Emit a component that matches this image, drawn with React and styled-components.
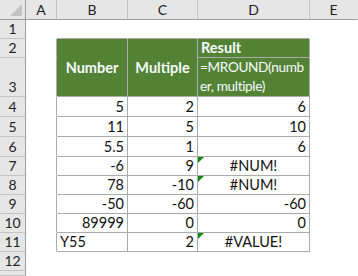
import React from 'react';
import styled, { createGlobalStyle } from 'styled-components';

const Global = createGlobalStyle`
  html, body { margin: 0; padding: 0; background: #fff; }
  body { font-family: Lato, 'Open Sans', sans-serif; }
`;

const GREEN = '#548235';
const LINE = '#ababab';

const Sheet = styled.div`
  display: grid;
  grid-template-columns: 26px 31px 71px 70px 112px 1fr;
  grid-template-rows: 20px 19px 19px 39px 20px 20px 20px 19px 19px 19px 19px 19px 19px 1fr;
  width: 358px;
  height: 276px;
  overflow: hidden;
  font-size: 14.5px;
  color: #111;
`;

const Corner = styled.div`
  position: relative;
  background: #e6e6e6;
  border-right: 1px solid #9b9b9b;
  border-bottom: 1px solid #9b9b9b;
  &::after {
    content: '';
    position: absolute;
    right: 3px;
    bottom: 3px;
    border-style: solid;
    border-width: 0 0 12px 12px;
    border-color: transparent transparent #c2c2c2 transparent;
  }
`;

const ColHead = styled.div`
  background: #e6e6e6;
  border-right: 1px solid ${p => (p.$last ? '#e6e6e6' : '#c4c4c4')};
  border-bottom: 1px solid #9b9b9b;
  display: flex;
  align-items: center;
  justify-content: center;
  color: #222;
  font-size: 14px;
`;

const RowHead = styled.div`
  background: #e6e6e6;
  border-right: 1px solid #9b9b9b;
  border-bottom: 1px solid #c4c4c4;
  display: flex;
  align-items: flex-end;
  justify-content: center;
  color: #222;
  font-size: 14px;
  line-height: 18px;
`;

const Cell = styled.div`
  position: relative;
  grid-row: span ${p => p.$span || 1};
  background: ${p => (p.$green ? GREEN : '#fff')};
  color: ${p => (p.$green ? '#f4fbff' : '#111')};
  font-weight: ${p => (p.$bold ? 700 : 400)};
  border-right: 1px solid ${p => (p.$right ? LINE : 'transparent')};
  border-bottom: 1px solid ${p => (p.$bottom ? LINE : 'transparent')};
  display: flex;
  flex-direction: ${p => (p.$stack ? 'column' : 'row')};
  align-items: ${p => p.$valign || 'flex-end'};
  justify-content: ${p => p.$align || 'flex-start'};
  padding: 0 3px;
  line-height: 18px;
  white-space: nowrap;
  overflow: hidden;
  &::before {
    content: '';
    display: ${p => (p.$flag ? 'block' : 'none')};
    position: absolute;
    left: 0;
    top: 0;
    border-style: solid;
    border-width: 6px 6px 0 0;
    border-color: #128a12 transparent transparent transparent;
  }
`;

const Formula = styled.span`
  font-size: 13.6px;
  letter-spacing: -0.35px;
  line-height: 19px;
  margin-left: -1px;
`;

const rows = [
  ['5', '2', '6'],
  ['11', '5', '10'],
  ['5.5', '1', '6'],
  ['-6', '9', '#NUM!'],
  ['78', '-10', '#NUM!'],
  ['-50', '-60', '-60'],
  ['89999', '0', '0'],
  ['Y55', '2', '#VALUE!'],
];

const isError = v => v.startsWith('#');
const isText = v => isNaN(Number(v)) && !isError(v);

const App = () => {
  return (
    <>
      <Global />
      <Sheet>
        <Corner />
        {['A', 'B', 'C', 'D', 'E'].map(l => (
          <ColHead key={l} $last={l === 'E'}>{l}</ColHead>
        ))}

        <RowHead>1</RowHead>
        <Cell />
        <Cell $bottom />
        <Cell $bottom />
        <Cell $bottom />
        <Cell />

        <RowHead>2</RowHead>
        <Cell $right />
        <Cell $span={2} $green $bold $right $bottom $valign="center" $align="center">Number</Cell>
        <Cell $span={2} $green $bold $right $bottom $valign="center" $align="center">Multiple</Cell>
        <Cell $green $bold $right $bottom>Result</Cell>
        <Cell />

        <RowHead>3</RowHead>
        <Cell $right />
        <Cell $green $right $bottom $stack $valign="flex-start" $align="flex-end">
          <Formula>=MROUND(numb</Formula>
          <Formula>er, multiple)</Formula>
        </Cell>
        <Cell />

        {rows.map((r, i) => (
          <React.Fragment key={i}>
            <RowHead>{i + 4}</RowHead>
            <Cell $right />
            {r.map((v, j) => (
              <Cell
                key={j}
                $right
                $bottom
                $flag={isError(v)}
                $align={isError(v) ? 'center' : isText(v) ? 'flex-start' : 'flex-end'}
              >
                {v}
              </Cell>
            ))}
            <Cell />
          </React.Fragment>
        ))}

        <RowHead>12</RowHead>
        <Cell />
        <Cell />
        <Cell />
        <Cell />
        <Cell />

        <RowHead />
      </Sheet>
    </>
  );
};

export default App;
